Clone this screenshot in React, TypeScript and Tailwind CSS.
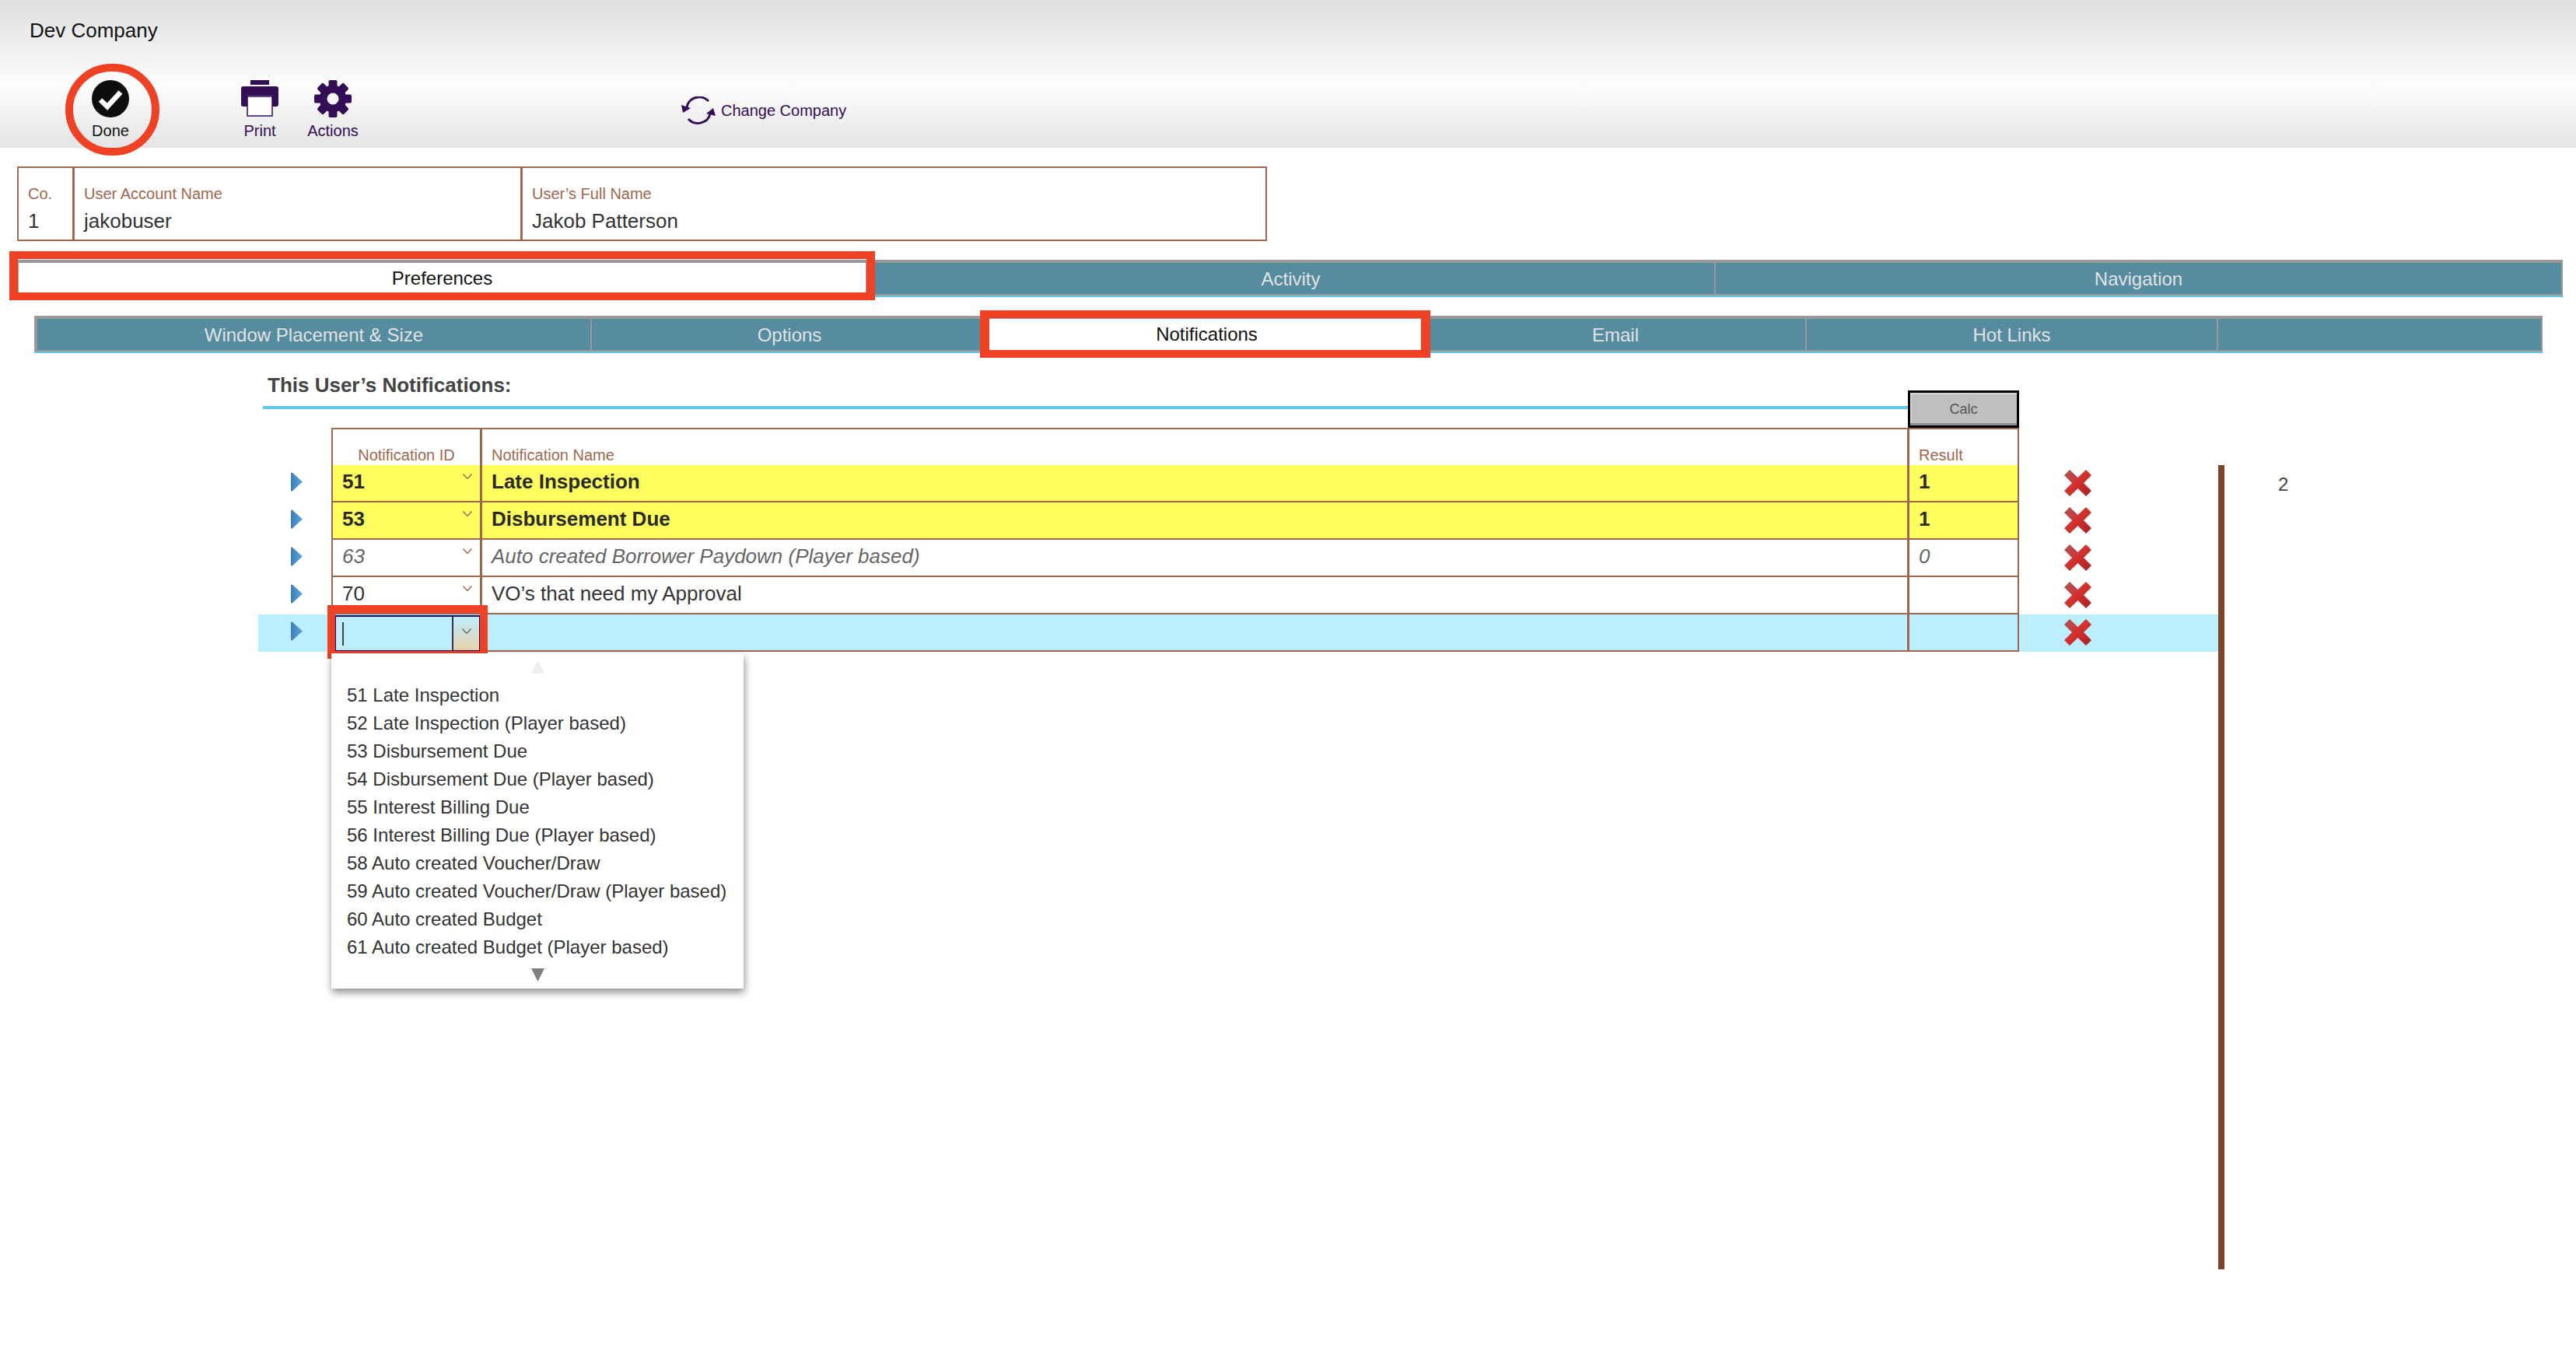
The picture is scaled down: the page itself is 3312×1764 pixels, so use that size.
import React, { useId } from 'react';

// rows of the notifications table
const rows = [
    { id: '51', name: 'Late Inspection', result: '1', tone: 'hit' },
    { id: '53', name: 'Disbursement Due', result: '1', tone: 'hit' },
    { id: '63', name: 'Auto created Borrower Paydown (Player based)', result: '0', tone: 'muted' },
    { id: '70', name: 'VO’s that need my Approval', result: '', tone: 'plain' },
];

const options = [
    '51 Late Inspection',
    '52 Late Inspection (Player based)',
    '53 Disbursement Due',
    '54 Disbursement Due (Player based)',
    '55 Interest Billing Due',
    '56 Interest Billing Due (Player based)',
    '58 Auto created Voucher/Draw',
    '59 Auto created Voucher/Draw (Player based)',
    '60 Auto created Budget',
    '61 Auto created Budget (Player based)',
];

const toneClass: Record<string, string> = {
    hit: 'bg-[#ffff5f] font-bold text-[#2b2b2b]',
    muted: 'bg-white italic text-[#666666]',
    plain: 'bg-white text-[#333333]',
};

function CheckCircle() {
    return (
        <svg width="48" height="48" viewBox="0 0 48 48">
            <circle cx="24" cy="24" r="24" fill="#0d0d0d" />
            <path d="M11 25.5 L20 34 L37 15.5" fill="none" stroke="#ffffff" strokeWidth="6.5" />
        </svg>
    );
}

function PrintIcon() {
    return (
        <svg width="48" height="48" viewBox="0 0 48 48">
            <rect x="12" y="0" width="24" height="6" fill="#330e57" />
            <path d="M3 8 H45 Q48 8 48 11 V31 Q48 34 45 34 H40 V20 H8 V34 H3 Q0 34 0 31 V11 Q0 8 3 8 Z" fill="#330e57" />
            <rect x="8" y="21" width="32" height="25" fill="#ffffff" stroke="#330e57" strokeWidth="1.5" />
        </svg>
    );
}

function GearIcon() {
    return (
        <svg width="48" height="48" viewBox="0 0 48 48">
            {[0, 45, 90, 135, 180, 225, 270, 315].map(deg => (
                <rect key={deg} x="18.5" y="0" width="11" height="12" rx="2" fill="#330e57" transform={`rotate(${deg} 24 24)`} />
            ))}
            <circle cx="24" cy="24" r="12.5" fill="none" stroke="#330e57" strokeWidth="10" />
        </svg>
    );
}

function SyncIcon() {
    return (
        <svg width="44" height="36" viewBox="0 0 44 36">
            <path d="M7 14 A16 15 0 0 1 35 6" fill="none" stroke="#330e57" strokeWidth="3" />
            <path d="M0 11 L12 15 L2 21 Z" fill="#330e57" />
            <path d="M37 22 A16 15 0 0 1 9 29" fill="none" stroke="#330e57" strokeWidth="3" />
            <path d="M41 15 L44 25 L32 22 Z" fill="#330e57" />
        </svg>
    );
}

function Chevron() {
    return (
        <svg width="12" height="7" viewBox="0 0 12 7" className="shrink-0">
            <path d="M0.5 0.5 L6 6.5 L11.5 0.5" fill="none" stroke="#a0674f" strokeWidth="1.4" />
        </svg>
    );
}

function RowArrow() {
    const id = useId();
    return (
        <svg width="15" height="25" viewBox="0 0 15 25" className="blur-[0.5px]">
            <defs>
                <linearGradient id={id} x1="0" y1="0" x2="1" y2="0">
                    <stop offset="0" stopColor="#3d7db8" />
                    <stop offset="1" stopColor="#5ba6de" />
                </linearGradient>
            </defs>
            <path d="M1 0 L15 12.5 L1 25 L0 23 V2 Z" fill={`url(#${id})`} />
        </svg>
    );
}

function DeleteIcon() {
    const id = useId();
    return (
        <svg width="35" height="34" viewBox="0 0 35 34" className="blur-[0.4px]">
            <defs>
                <linearGradient id={id} x1="0" y1="0" x2="1" y2="1">
                    <stop offset="0" stopColor="#a85a60" />
                    <stop offset="0.5" stopColor="#d4302c" />
                    <stop offset="1" stopColor="#a52222" />
                </linearGradient>
            </defs>
            <path
                d="M0 7 L7 0 L17.5 10 L28 0 L35 7 L25 17 L35 27 L28 34 L17.5 24 L7 34 L0 27 L10 17 Z"
                fill={`url(#${id})`}
            />
        </svg>
    );
}

function ToolButton({ icon, label, className, marked }: { icon: React.ReactNode; label: string; className: string; marked?: boolean }) {
    return (
        <div className={`relative flex w-[88px] flex-col items-center ${className}`}>
            {icon}
            <span className="mt-[5px] text-[20px] leading-[24px]">{label}</span>
            {marked && <span className="absolute -left-[14px] -top-[21px] h-[118px] w-[121px] rounded-full border-[10px] border-[#ef4123]" />}
        </div>
    );
}

function Field({ label, value, className }: { label: string; value: string; className: string }) {
    return (
        <div className={`flex flex-col justify-end pb-[9px] pl-[12px] ${className}`}>
            <span className="text-[20px] leading-[24px] text-[#a0674f]">{label}</span>
            <span className="mt-[8px] text-[26px] leading-[30px] text-[#333333]">{value}</span>
        </div>
    );
}

// white tab with the red annotation frame drawn over it
function MarkedTab({ label, className, frame }: { label: string; className: string; frame: string }) {
    return (
        <div className={`relative flex items-center justify-center bg-white text-[24px] text-[#111111] ${className}`}>
            {label}
            <span className={`absolute z-10 border-[#ef4123] ${frame}`} />
        </div>
    );
}

function Tab({ label, className }: { label?: string; className: string }) {
    return (
        <div className={`flex items-center justify-center border-l-2 border-[#999999] bg-[#568c9f] pt-[2px] text-[24px] text-[#e2e2e2] ${className}`}>
            {label}
        </div>
    );
}

export default function App() {
    return (
        <div className="h-[1764px] w-[3312px] overflow-hidden bg-white font-['Liberation_Sans',Arial,sans-serif]">
            <header className="h-[190px] bg-[linear-gradient(#dfdfdf,#fdfdfd_58%,#e4e4e4)]">
                <div className="pl-[38px] pt-[23px] text-[26px] leading-[32px] text-[#111111]">Dev Company</div>
                <div className="mt-[48px] flex items-start pl-[98px] text-[#330e57]">
                    <ToolButton icon={<CheckCircle />} label="Done" className="text-[#111111]" marked />
                    <ToolButton icon={<PrintIcon />} label="Print" className="ml-[104px]" />
                    <ToolButton icon={<GearIcon />} label="Actions" className="ml-[6px]" />
                    <div className="ml-[404px] mt-[21px] flex items-center gap-[7px] text-[20px]">
                        <SyncIcon />
                        <span>Change Company</span>
                    </div>
                </div>
            </header>

            <section className="ml-[22px] mt-[24px] flex h-[96px] w-[1607px] border-2 border-[#a0674f]">
                <Field label="Co." value="1" className="w-[69px]" />
                <Field label="User Account Name" value="jakobuser" className="w-[576px] border-l-[3px] border-[#a0674f]" />
                <Field label="User’s Full Name" value="Jakob Patterson" className="flex-1 border-l-[3px] border-[#a0674f]" />
            </section>

            <nav className="ml-[22px] mt-[24px] w-[3273px] border-b-2 border-[#62c6e9]">
                <div className="flex h-[46px] border-x-2 border-b-2 border-t-4 border-[#999999]">
                    <MarkedTab
                        label="Preferences"
                        className="w-[1089px]"
                        frame="-left-[12px] -top-[15px] h-[63px] w-[1113px] border-x-[11px] border-y-[10px]"
                    />
                    <Tab label="Activity" className="w-[1091px]" />
                    <Tab label="Navigation" className="flex-1" />
                </div>
            </nav>

            <nav className="ml-[44px] mt-[24px] w-[3225px] border-b-2 border-[#62c6e9]">
                <div className="flex h-[46px] border-x-2 border-b-2 border-t-4 border-[#999999]">
                    <Tab label="Window Placement & Size" className="w-[713px] border-l-0" />
                    <Tab label="Options" className="w-[510px]" />
                    <MarkedTab
                        label="Notifications"
                        className="w-[562px] pl-[3px]"
                        frame="-left-[9px] -top-[11px] h-[61px] w-[579px] border-x-[12px] border-y-[10px]"
                    />
                    <Tab label="Email" className="w-[490px]" />
                    <Tab label="Hot Links" className="w-[529px]" />
                    <Tab className="flex-1" />
                </div>
            </nav>

            <main className="ml-[332px] mt-[22px] flex items-start">
                <div className="w-[2520px]">
                    <div className="flex w-[2264px] pl-[6px]">
                        <div className="h-[50px] w-[2115px] border-b-4 border-[#62c6e9] pl-[6px] text-[26px] font-bold leading-[38px] text-[#444444]">
                            This User’s Notifications:
                        </div>
                        <div className="mt-[26px] flex h-[48px] flex-1 items-center justify-center border-[3px] border-black bg-[#bfbfbf] text-[18px] text-[#555555] shadow-[inset_0_-3px_0_#8f8f8f,inset_2px_2px_0_#d6d6d6]">
                            Calc
                        </div>
                    </div>

                    <div className="ml-[94px] flex h-[48px] w-[2170px] items-end border-t-2 border-[#a0674f] pb-0 text-[20px] leading-[24px] text-[#a0674f]">
                        <div className="flex h-full w-[194px] items-end justify-center border-l-2 border-r-[3px] border-[#a0674f] pb-[1px]">Notification ID</div>
                        <div className="flex h-full flex-1 items-end pb-[1px] pl-[12px]">Notification Name</div>
                        <div className="flex h-full w-[144px] items-end border-l-[3px] border-r-2 border-[#a0674f] pb-[1px] pl-[12px]">Result</div>
                    </div>

                    {rows.map(row => (
                        <div key={row.id} className="flex h-[48px]">
                            <div className="flex w-[94px] items-center pb-[5px] pl-[42px]"><RowArrow /></div>
                            <div className={`flex w-[2170px] text-[26px] leading-[30px] ${toneClass[row.tone]}`}>
                                <div className="flex w-[194px] items-center justify-between border-b-2 border-l-2 border-r-[3px] border-[#a0674f] pb-[4px] pl-[12px] pr-[10px]">
                                    <span>{row.id}</span>
                                    <span className="mb-[14px]"><Chevron /></span>
                                </div>
                                <div className="flex flex-1 items-center border-b-2 border-[#a0674f] pb-[4px] pl-[12px]">{row.name}</div>
                                <div className="flex w-[144px] items-center border-b-2 border-l-[3px] border-r-2 border-[#a0674f] pb-[4px] pl-[12px]">{row.result}</div>
                            </div>
                            <div className="flex flex-1 items-center pb-[2px] pl-[58px]"><DeleteIcon /></div>
                        </div>
                    ))}

                    <div className="flex h-[48px] bg-[#bdeefe]">
                        <div className="flex w-[94px] items-center pb-[5px] pl-[42px]"><RowArrow /></div>
                        <div className="flex w-[2170px]">
                            <div className="relative flex w-[194px] border-b-2 border-[#a0674f] pl-[5px] pr-[3px]">
                                <span className="absolute -left-[5px] -top-[12px] z-10 h-[69px] w-[206px] border-[10px] border-[#ef4123]" />
                                <div className="mt-[1px] flex h-[46px] flex-1 border border-t-2 border-[#1e0f6a]">
                                    <div className="flex flex-1 items-center pl-[8px]">
                                        <span className="h-[30px] w-[2px] bg-[#444444]" />
                                    </div>
                                    <div className="flex w-[35px] justify-center border-l-2 border-[#333355] bg-[linear-gradient(#bdeefe,#e8d1ad)] pt-[15px]">
                                        <svg width="12" height="7" viewBox="0 0 12 7">
                                            <path d="M0.5 0.5 L6 6.5 L11.5 0.5" fill="none" stroke="#666666" strokeWidth="1.4" />
                                        </svg>
                                    </div>
                                </div>
                                <div className="absolute left-0 top-[50px] z-20 h-[431px] w-[530px] bg-white pt-[9px] text-[24px] leading-[36px] text-[#333333] shadow-[1px_5px_10px_rgba(0,0,0,0.45)]">
                                    <svg width="17" height="17" viewBox="0 0 17 17" className="mx-auto">
                                        <path d="M8.5 0 L17 17 H0 Z" fill="#eeeeee" />
                                    </svg>
                                    <ul className="mt-[10px] pl-[20px]">
                                        {options.map(option => <li key={option}>{option}</li>)}
                                    </ul>
                                    <svg width="17" height="17" viewBox="0 0 17 17" className="mx-auto mt-[9px]">
                                        <path d="M0 0 H17 L8.5 17 Z" fill="#808080" />
                                    </svg>
                                </div>
                            </div>
                            <div className="flex-1 border-b-2 border-[#a0674f]" />
                            <div className="w-[144px] border-b-2 border-l-[3px] border-r-2 border-[#a0674f]" />
                        </div>
                        <div className="flex flex-1 items-center pb-[2px] pl-[58px]"><DeleteIcon /></div>
                    </div>
                </div>

                <div className="ml-0 mt-[122px] h-[1034px] w-[8px] bg-[#7c4428]" />
                <div className="ml-[69px] mt-[133px] text-[24px] leading-[28px] text-[#444444]">2</div>
            </main>
        </div>
    );
}
